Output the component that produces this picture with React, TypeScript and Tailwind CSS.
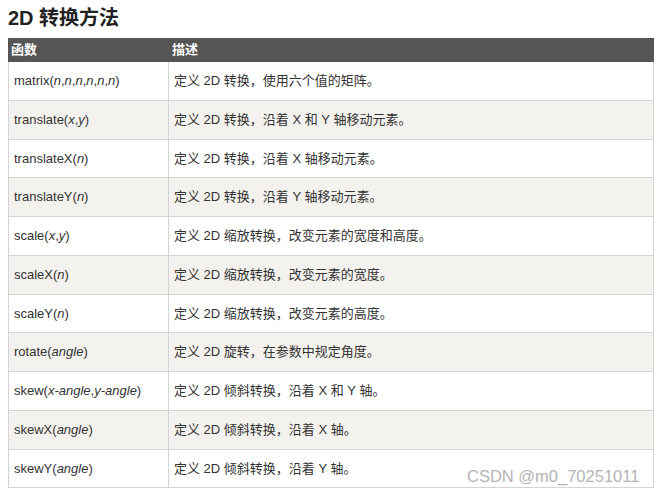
const rows: { fn: React.ReactNode; desc: string }[] = [
  {
    fn: (
      <>
        matrix(<i>n</i>,<i>n</i>,<i>n</i>,<i>n</i>,<i>n</i>,<i>n</i>)
      </>
    ),
    desc: "定义 2D 转换，使用六个值的矩阵。",
  },
  {
    fn: (
      <>
        translate(<i>x</i>,<i>y</i>)
      </>
    ),
    desc: "定义 2D 转换，沿着 X 和 Y 轴移动元素。",
  },
  {
    fn: (
      <>
        translateX(<i>n</i>)
      </>
    ),
    desc: "定义 2D 转换，沿着 X 轴移动元素。",
  },
  {
    fn: (
      <>
        translateY(<i>n</i>)
      </>
    ),
    desc: "定义 2D 转换，沿着 Y 轴移动元素。",
  },
  {
    fn: (
      <>
        scale(<i>x</i>,<i>y</i>)
      </>
    ),
    desc: "定义 2D 缩放转换，改变元素的宽度和高度。",
  },
  {
    fn: (
      <>
        scaleX(<i>n</i>)
      </>
    ),
    desc: "定义 2D 缩放转换，改变元素的宽度。",
  },
  {
    fn: (
      <>
        scaleY(<i>n</i>)
      </>
    ),
    desc: "定义 2D 缩放转换，改变元素的高度。",
  },
  {
    fn: (
      <>
        rotate(<i>angle</i>)
      </>
    ),
    desc: "定义 2D 旋转，在参数中规定角度。",
  },
  {
    fn: (
      <>
        skew(<i>x-angle</i>,<i>y-angle</i>)
      </>
    ),
    desc: "定义 2D 倾斜转换，沿着 X 和 Y 轴。",
  },
  {
    fn: (
      <>
        skewX(<i>angle</i>)
      </>
    ),
    desc: "定义 2D 倾斜转换，沿着 X 轴。",
  },
  {
    fn: (
      <>
        skewY(<i>angle</i>)
      </>
    ),
    desc: "定义 2D 倾斜转换，沿着 Y 轴。",
  },
];

export default function App() {
  return (
    <div className="relative w-[658px] h-[494px] bg-white overflow-hidden font-['Liberation_Sans','Noto_Sans_CJK_SC',sans-serif] text-[#333]">
      {/* Title */}
      <h2 className="pl-[8px] pt-[6px] h-[38px] text-[20px] font-bold leading-[24px] text-[#222]">
        2D 转换方法
      </h2>

      {/* Table */}
      <div className="ml-[8px] w-[646px] text-[13px]">
        <div className="flex h-[24px] items-center bg-[#555555] text-white font-bold">
          <div className="w-[161px] pl-[3px]">函数</div>
          <div className="flex-1 pl-[3px]">描述</div>
        </div>
        <div className="border-l border-r border-[#d4d4d4]">
          {rows.map((r, i) => (
            <div
              key={i}
              className={`flex h-[38.75px] items-center border-b border-[#d4d4d4] ${
                i % 2 === 1 ? "bg-[#f3f2ee]" : "bg-white"
              }`}
            >
              <div className="w-[160px] h-full flex items-center pl-[5px] border-r border-[#d4d4d4]">
                <span>{r.fn}</span>
              </div>
              <div className="flex-1 pl-[5px]">{r.desc}</div>
            </div>
          ))}
        </div>
      </div>

      {/* Watermark */}
      <div className="absolute left-[467px] top-[465px] text-[16.5px] leading-[22px] text-[#b4b4b4]">
        CSDN @m0_70251011
      </div>
    </div>
  );
}
